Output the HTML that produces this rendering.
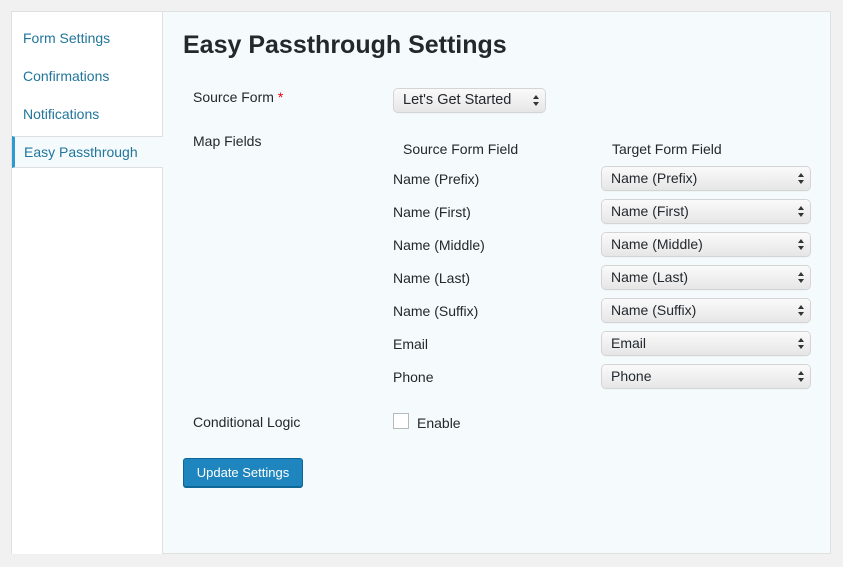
<!DOCTYPE html>
<html><head><style>
body{margin:0;width:843px;height:567px;background:#f1f1f1;font-family:"Liberation Sans",sans-serif;font-size:14px;color:#23282d;position:relative;overflow:hidden}
.a{position:absolute;white-space:nowrap}
.panel{position:absolute;left:11px;top:11px;width:820px;height:543px;border:1px solid #e0e0e0;background:#f5fafd;box-sizing:border-box}
.side{position:absolute;left:12px;top:12px;width:150px;height:542px;background:#fff;border-right:1px solid #e0e0e0}
.nav{color:#21759b;font-size:14px}
.sel{position:absolute;height:23px;border-radius:4px;background:linear-gradient(#fafafa,#e6e6e6);box-shadow:0 0 0 1px #d4d4d4,0 1px 1px rgba(0,0,0,.15);font-size:14px;line-height:23px;padding-left:9px;box-sizing:border-box}
.sel:after{content:"";position:absolute;right:6px;top:6px;border:3.5px solid transparent;border-bottom:4px solid #333;border-top:none}
.sel:before{content:"";position:absolute;right:6px;top:13px;border:3.5px solid transparent;border-top:4px solid #333;border-bottom:none}
</style></head><body>
<div class="panel"></div>
<div class="side"></div>
<div class="a" style="left:12px;top:136px;width:151px;height:32px;background:#f5fafd;border-top:1px solid #e0e0e0;border-bottom:1px solid #e0e0e0;box-sizing:border-box;border-left:3px solid #2e9ad0"></div>
<div class="a nav" style="left:23px;top:30px">Form Settings</div>
<div class="a nav" style="left:23px;top:68px">Confirmations</div>
<div class="a nav" style="left:23px;top:106px">Notifications</div>
<div class="a nav" style="left:24px;top:144px">Easy Passthrough</div>
<div class="a" style="left:183px;top:31px;font-size:25px;font-weight:bold">Easy Passthrough Settings</div>
<div class="a" style="left:193px;top:89px">Source Form <span style="color:#e00">*</span></div>
<div class="sel" style="left:394px;top:89px;width:151px;font-size:14.5px">Let's Get Started</div>
<div class="a" style="left:193px;top:133px">Map Fields</div>
<div class="a" style="left:403px;top:141px">Source Form Field</div>
<div class="a" style="left:612px;top:141px">Target Form Field</div>
<div class="a" style="left:393px;top:171px">Name (Prefix)</div><div class="sel" style="left:602px;top:167px;width:208px">Name (Prefix)</div>
<div class="a" style="left:393px;top:204px">Name (First)</div><div class="sel" style="left:602px;top:200px;width:208px">Name (First)</div>
<div class="a" style="left:393px;top:237px">Name (Middle)</div><div class="sel" style="left:602px;top:233px;width:208px">Name (Middle)</div>
<div class="a" style="left:393px;top:270px">Name (Last)</div><div class="sel" style="left:602px;top:266px;width:208px">Name (Last)</div>
<div class="a" style="left:393px;top:303px">Name (Suffix)</div><div class="sel" style="left:602px;top:299px;width:208px">Name (Suffix)</div>
<div class="a" style="left:393px;top:336px">Email</div><div class="sel" style="left:602px;top:332px;width:208px">Email</div>
<div class="a" style="left:393px;top:369px">Phone</div><div class="sel" style="left:602px;top:365px;width:208px">Phone</div>
<div class="a" style="left:193px;top:414px">Conditional Logic</div>
<div class="a" style="left:393px;top:413px;width:16px;height:16px;border:1px solid #b4b9be;background:#fff;box-sizing:border-box"></div>
<div class="a" style="left:417px;top:415px">Enable</div>
<div class="a" style="left:183px;top:458px;width:120px;height:29px;background:#1e85be;border:1px solid #0e6797;border-radius:3px;box-sizing:border-box;color:#fff;font-size:13px;line-height:27px;text-align:center;box-shadow:0 1px 0 #0e6797">Update Settings</div>
</body></html>
